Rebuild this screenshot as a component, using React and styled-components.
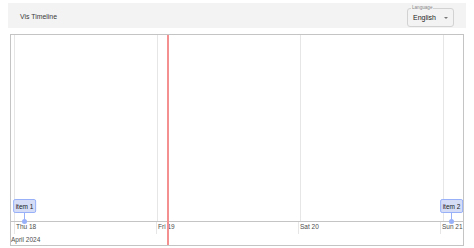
import React from "react";
import styled, { createGlobalStyle } from "styled-components";

const Global = createGlobalStyle`
  html, body { margin: 0; padding: 0; background: #fff; }
  body { font-family: "Liberation Sans", Arial, sans-serif; }
`;

const Page = styled.div`
  padding: 3px 8px 0 8px;
  width: 474px;
  box-sizing: border-box;
`;

const Header = styled.div`
  height: 25px;
  background: #f3f3f3;
  display: flex;
  align-items: center;
  justify-content: space-between;
  padding: 0 12px;
`;

const Title = styled.div`
  font-size: 6.9px;
  color: #3a3a3a;
  padding-top: 1px;
`;

const Select = styled.div`
  position: relative;
  width: 47px;
  height: 19px;
  box-sizing: border-box;
  border: 1px solid #d2d2d2;
  border-radius: 3px;
  display: flex;
  align-items: center;
  justify-content: space-between;
  padding: 1px 5px 0 5px;
  font-size: 7px;
  color: #222;
  margin-top: 3px;
`;

const SelectLabel = styled.span`
  position: absolute;
  top: -4px;
  left: 3px;
  padding: 0 1px;
  font-size: 4.6px;
  color: #888;
  background: #f3f3f3;
  line-height: 6px;
`;

const Caret = styled.span`
  width: 0;
  height: 0;
  border-left: 2px solid transparent;
  border-right: 2px solid transparent;
  border-top: 2px solid #777;
`;

const Timeline = styled.div`
  position: relative;
  margin: 6px 2px 0 2px;
  height: 212px;
  box-sizing: border-box;
  border: 1px solid #c4c4c4;
  display: flex;
  flex-direction: column;
  overflow: hidden;
`;

const Center = styled.div`
  height: 186px;
  flex: none;
  display: flex;
  padding-left: 3px;
  border-bottom: 1px solid #c4c4c4;
`;

const Column = styled.div`
  width: ${(p) => p.$w}px;
  flex: none;
  border-left: 1px solid #e6e6e6;
`;

const Axis = styled.div`
  height: 12px;
  flex: none;
  display: flex;
  padding-left: 3px;
`;

const AxisCell = styled.div`
  width: ${(p) => p.$w}px;
  flex: none;
  border-left: 1px solid #e6e6e6;
  font-size: 6.5px;
  line-height: 8px;
  color: #4d4d4d;
  padding: 1px 0 0 1px;
  box-sizing: border-box;
  white-space: nowrap;
`;

const Major = styled.div`
  height: 11px;
  flex: none;
  font-size: 6.5px;
  line-height: 8px;
  color: #4d4d4d;
  padding: 2px 0 0 0;
  box-sizing: border-box;
`;

const NowLine = styled.div`
  position: absolute;
  top: 0;
  bottom: 0;
  left: 155.5px;
  width: 2px;
  background: #f59090;
`;

const Item = styled.div`
  position: absolute;
  top: 164px;
  left: ${(p) => p.$x}px;
  transform: translateX(-50%);
  height: 14px;
  box-sizing: border-box;
  padding: 0 2px;
  background: #d5ddf6;
  border: 1px solid #97b0f8;
  border-radius: 2px;
  font-size: 6.5px;
  color: #1a1a1a;
  display: flex;
  align-items: center;
  white-space: nowrap;
`;

const Stem = styled.div`
  position: absolute;
  top: 178px;
  left: ${(p) => p.$x}px;
  width: 1px;
  height: 8px;
  background: #97b0f8;
`;

const Dot = styled.div`
  position: absolute;
  top: 184px;
  left: ${(p) => p.$x - 2}px;
  width: 5px;
  height: 5px;
  border-radius: 50%;
  background: #97b0f8;
`;

const cols = [142, 142, 142, 30];
const labels = ["Thu 18", "Fri 19", "Sat 20", "Sun 21"];
const items = [
  { label: "item 1", x: 13 },
  { label: "item 2", x: 440 },
];

export default function App() {
  return (
    <>
      <Global />
      <Page>
        <Header>
          <Title>Vis Timeline</Title>
          <Select>
            <SelectLabel>Language</SelectLabel>
            <span>English</span>
            <Caret />
          </Select>
        </Header>
        <Timeline>
          <Center>
            {cols.map((w, i) => (
              <Column key={i} $w={w} />
            ))}
          </Center>
          <Axis>
            {cols.map((w, i) => (
              <AxisCell key={i} $w={w}>
                {labels[i]}
              </AxisCell>
            ))}
          </Axis>
          <Major>April 2024</Major>
          <NowLine />
          {items.map((it) => (
            <React.Fragment key={it.label}>
              <Item $x={it.x + 0.5}>{it.label}</Item>
              <Stem $x={it.x} />
              <Dot $x={it.x} />
            </React.Fragment>
          ))}
        </Timeline>
      </Page>
    </>
  );
}
